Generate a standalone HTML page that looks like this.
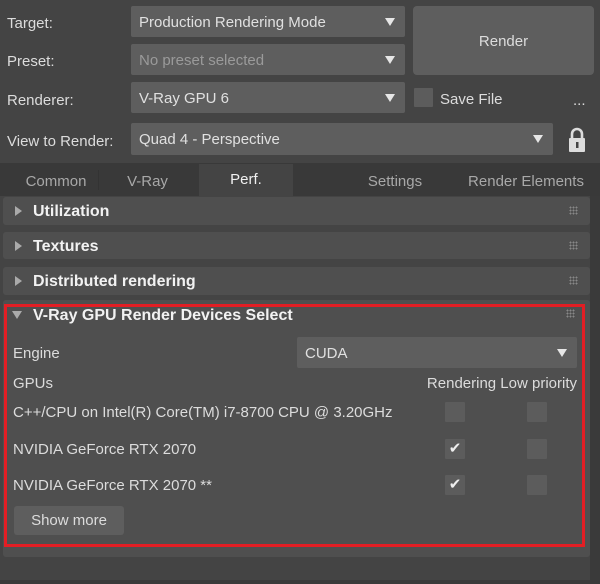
<!DOCTYPE html>
<html><head><style>
*{margin:0;padding:0;box-sizing:border-box}
body{width:600px;height:584px;background:#444;font-family:"Liberation Sans",sans-serif;font-size:15px;color:#dcdcdc;position:relative;overflow:hidden}
.a{position:absolute}
.dd{position:absolute;background:#5e5e5e;border-radius:2px;padding-left:8px;line-height:34px;color:#e0e0e0}
.dd:after{content:"";position:absolute;right:10px;top:12px;border-left:5px solid transparent;border-right:5px solid transparent;border-top:8px solid #e6e6e6}
.roll{position:absolute;left:3px;width:587px;background:#4f4f4f;border-radius:3px}
.roll b{position:absolute;left:30px;top:6px;font-size:16px;color:#f2f2f2}
.tri{position:absolute;left:12px;top:9px;border-top:5px solid transparent;border-bottom:5px solid transparent;border-left:7px solid #aaa}
.grip{position:absolute;right:12px;top:9px;width:9px;height:9px;background-image:radial-gradient(#888 0.8px,transparent 1px);background-size:3px 3px}
.cb{position:absolute;width:20px;height:20px;background:#5c5c5c;border-radius:1px;color:#eee;font-size:15px;line-height:20px;text-align:center}
.tab{position:absolute;top:164px;height:31px;line-height:35px;text-align:center;color:#a8a8a8}
</style></head><body>
<div class="a" style="left:7px;top:15px">Target:</div>
<div class="a" style="left:7px;top:53px">Preset:</div>
<div class="a" style="left:7px;top:92px">Renderer:</div>
<div class="a" style="left:7px;top:133px">View to Render:</div>
<div class="dd" style="left:131px;top:6px;width:274px;height:31px">Production Rendering Mode</div>
<div class="dd" style="left:131px;top:44px;width:274px;height:31px;color:#9a9a9a">No preset selected</div>
<div class="dd" style="left:131px;top:82px;width:274px;height:31px">V-Ray GPU 6</div>
<div class="dd" style="left:131px;top:123px;width:422px;height:32px">Quad 4 - Perspective</div>
<div class="a" style="left:413px;top:6px;width:181px;height:69px;background:#5e5e5e;border-radius:4px;text-align:center;line-height:71px">Render</div>
<div class="cb" style="left:414px;top:88px;width:19px;height:19px"></div>
<div class="a" style="left:440px;top:91px">Save File</div>
<div class="a" style="left:573px;top:92px">...</div>
<svg class="a" style="left:567px;top:127px" width="20" height="26" viewBox="0 0 20 26"><path d="M5 11V7a5 5 0 0 1 10 0v4" stroke="#ddd" stroke-width="2.6" fill="none"/><rect x="2" y="11" width="16" height="14" rx="1" fill="#ddd"/><rect x="9" y="15" width="2.5" height="6" fill="#444"/></svg>
<div class="a" style="left:0;top:163px;width:600px;height:33px;background:#393939"></div>
<div class="a" style="left:199px;top:164px;width:94px;height:32px;background:#444"></div>
<div class="a" style="left:98px;top:170px;width:1px;height:20px;background:#333"></div>
<div class="a" style="left:393px;top:170px;width:1px;height:20px;background:#333"></div>
<div class="tab" style="left:0;width:112px">Common</div>
<div class="tab" style="left:100px;width:95px">V-Ray</div>
<div class="tab" style="left:199px;width:94px;color:#f0f0f0;line-height:32px">Perf.</div>
<div class="tab" style="left:345px;width:100px">Settings</div>
<div class="tab" style="left:458px;width:136px">Render Elements</div>
<div class="a" style="left:590px;top:196px;width:10px;height:388px;background:#3a3a3a"></div>
<div class="a" style="left:0;top:580px;width:600px;height:4px;background:#3a3a3a"></div>
<div class="roll" style="top:197px;height:28px"><div class="tri"></div><b>Utilization</b><div class="grip"></div></div>
<div class="roll" style="top:232px;height:27px"><div class="tri"></div><b>Textures</b><div class="grip"></div></div>
<div class="roll" style="top:267px;height:28px"><div class="tri"></div><b>Distributed rendering</b><div class="grip"></div></div>
<div class="roll" style="top:300px;height:257px"></div>
<div class="a" style="left:4px;top:304px;width:581px;height:243px;border:3px solid #e31e24"></div>
<div class="a" style="left:12px;top:311px;border-left:5px solid transparent;border-right:5px solid transparent;border-top:8px solid #aaa"></div>
<div class="a" style="left:566px;top:309px;width:9px;height:9px;background-image:radial-gradient(#888 0.8px,transparent 1px);background-size:3px 3px"></div>
<div class="a" style="left:33px;top:307px;font-size:16px;font-weight:bold;color:#f2f2f2">V-Ray GPU Render Devices Select</div>
<div class="a" style="left:13px;top:345px">Engine</div>
<div class="dd" style="left:297px;top:337px;width:280px;height:31px">CUDA</div>
<div class="a" style="left:13px;top:375px">GPUs</div>
<div class="a" style="right:23px;top:375px">Rendering Low priority</div>
<div class="a" style="left:13px;top:404px">C++/CPU on Intel(R) Core(TM) i7-8700 CPU @ 3.20GHz</div>
<div class="a" style="left:13px;top:441px">NVIDIA GeForce RTX 2070</div>
<div class="a" style="left:13px;top:477px">NVIDIA GeForce RTX 2070 **</div>
<div class="cb" style="left:445px;top:402px"></div><div class="cb" style="left:527px;top:402px"></div>
<div class="cb" style="left:445px;top:439px">✔</div><div class="cb" style="left:527px;top:439px"></div>
<div class="cb" style="left:445px;top:475px">✔</div><div class="cb" style="left:527px;top:475px"></div>
<div class="a" style="left:14px;top:506px;width:110px;height:29px;background:#5e5e5e;border-radius:3px;text-align:center;line-height:30px">Show more</div>
</body></html>
